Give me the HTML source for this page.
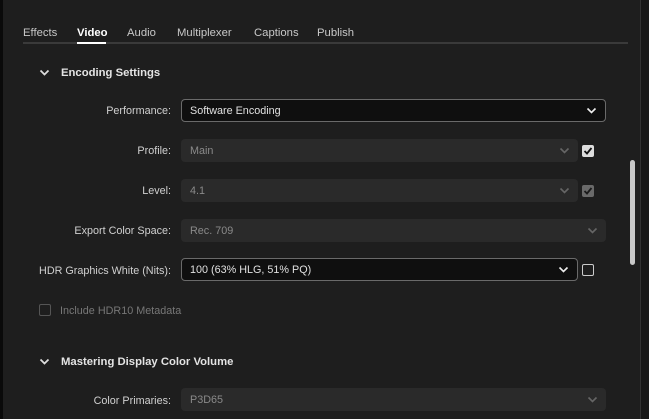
<!DOCTYPE html>
<html><head><style>
body{margin:0;width:649px;height:419px;background:#1e1e1e;overflow:hidden;position:relative;font-family:"Liberation Sans",sans-serif;font-size:10.8px;color:#d6d6d6}
.a{position:absolute}
.tab{position:absolute;top:27px;font-size:11.3px;color:#c8c8c8}
.lbl{position:absolute;right:478px;text-align:right;color:#d0d0d0;white-space:nowrap}
.dd{position:absolute;left:181px;height:23px;box-sizing:border-box;border-radius:4px;padding-left:9px;line-height:25px;font-size:10.8px}
.on{background:#0f0f0f;border:1px solid #6a6a6a;color:#e0e0e0;line-height:23px;padding-left:8px}
.off{background:#2a2a2a;color:#8a8a8a}
.chev{position:absolute;right:8px;top:8px}
.cb{position:absolute;left:582px;width:12px;height:12px;box-sizing:border-box;border-radius:2px}
.hd{position:absolute;left:61px;font-weight:bold;color:#e4e4e4;font-size:11.3px}
</style></head><body>
<div class="a" style="left:0;top:0;width:3px;height:419px;background:#0a0a0a"></div>
<div class="a" style="left:640px;top:0;width:1px;height:419px;background:#333"></div>
<div class="a" style="left:641px;top:0;width:8px;height:419px;background:#181818"></div>
<div class="tab" style="left:23px">Effects</div>
<div class="tab" style="left:77px;color:#fff;font-weight:bold">Video</div>
<div class="tab" style="left:127px">Audio</div>
<div class="tab" style="left:177px">Multiplexer</div>
<div class="tab" style="left:254px">Captions</div>
<div class="tab" style="left:317px">Publish</div>
<div class="a" style="left:23px;top:42px;width:605px;height:2px;background:#3a3a3a"></div>
<div class="a" style="left:77px;top:42px;width:29px;height:2px;background:#fff"></div>

<svg class="a" style="left:39px;top:69px" width="11" height="8"><path d="M1.5 1.5L5.5 5.5L9.5 1.5" stroke="#ddd" stroke-width="1.8" fill="none"/></svg>
<div class="hd" style="top:67px">Encoding Settings</div>

<div class="lbl" style="top:105px">Performance:</div>
<div class="dd on" style="top:99px;width:425px">Software Encoding<svg class="chev" width="11" height="8" style="top:7px"><path d="M1.5 1.5L5.5 5.5L9.5 1.5" stroke="#eee" stroke-width="1.6" fill="none"/></svg></div>

<div class="lbl" style="top:145px">Profile:</div>
<div class="dd off" style="top:139px;width:397px">Main<svg class="chev" width="11" height="8"><path d="M1.5 1.5L5.5 5.5L9.5 1.5" stroke="#666" stroke-width="1.6" fill="none"/></svg></div>
<div class="cb" style="top:145px;background:#ddd"><svg width="12" height="12" class="a" style="left:0;top:0"><path d="M2.5 6L5 8.5L9.5 3" stroke="#111" stroke-width="1.8" fill="none"/></svg></div>

<div class="lbl" style="top:185px">Level:</div>
<div class="dd off" style="top:179px;width:397px">4.1<svg class="chev" width="11" height="8"><path d="M1.5 1.5L5.5 5.5L9.5 1.5" stroke="#666" stroke-width="1.6" fill="none"/></svg></div>
<div class="cb" style="top:185px;background:#6a6a6a"><svg width="12" height="12" class="a" style="left:0;top:0"><path d="M2.5 6L5 8.5L9.5 3" stroke="#1a1a1a" stroke-width="1.8" fill="none"/></svg></div>

<div class="lbl" style="top:225px">Export Color Space:</div>
<div class="dd off" style="top:219px;width:425px">Rec. 709<svg class="chev" width="11" height="8"><path d="M1.5 1.5L5.5 5.5L9.5 1.5" stroke="#666" stroke-width="1.6" fill="none"/></svg></div>

<div class="lbl" style="top:265px">HDR Graphics White (Nits):</div>
<div class="dd on" style="top:258px;width:397px">100 (63% HLG, 51% PQ)<svg class="chev" width="11" height="8" style="top:7px"><path d="M1.5 1.5L5.5 5.5L9.5 1.5" stroke="#eee" stroke-width="1.6" fill="none"/></svg></div>
<div class="cb" style="top:264px;border:1.5px solid #ccc"></div>

<div class="cb" style="left:39px;top:304px;border:1.5px solid #555"></div>
<div class="a" style="left:60px;top:305px;color:#777">Include HDR10 Metadata</div>

<svg class="a" style="left:39px;top:358px" width="11" height="8"><path d="M1.5 1.5L5.5 5.5L9.5 1.5" stroke="#ddd" stroke-width="1.8" fill="none"/></svg>
<div class="hd" style="top:356px">Mastering Display Color Volume</div>

<div class="lbl" style="top:395px">Color Primaries:</div>
<div class="dd off" style="top:388px;width:425px">P3D65<svg class="chev" width="11" height="8"><path d="M1.5 1.5L5.5 5.5L9.5 1.5" stroke="#666" stroke-width="1.6" fill="none"/></svg></div>

<div class="a" style="left:630px;top:160px;width:5px;height:105px;border-radius:3px;background:#c8c8c8"></div>
</body></html>
